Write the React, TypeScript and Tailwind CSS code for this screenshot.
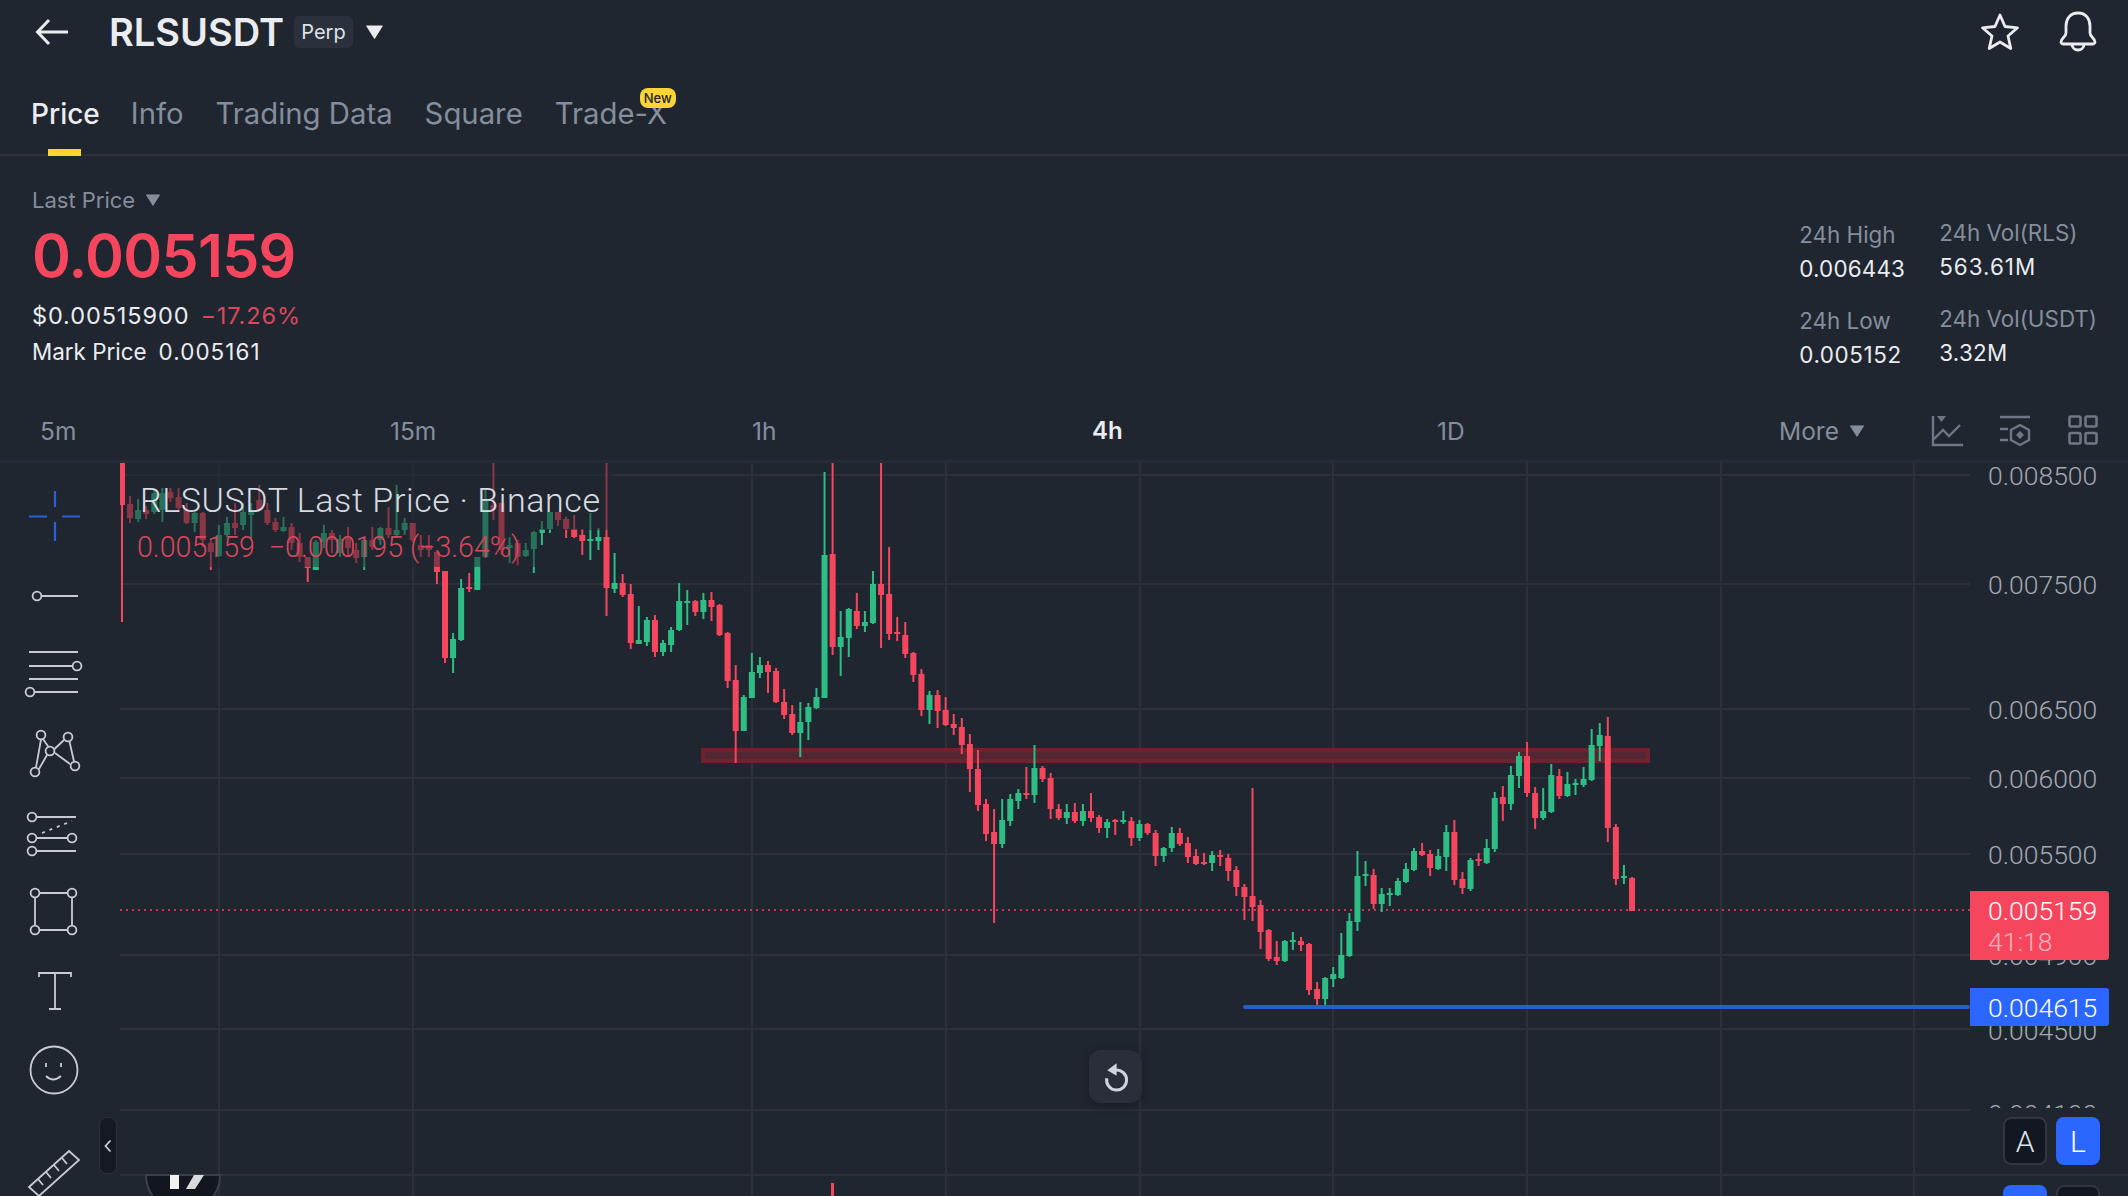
import React from "react";

const C: [number, number, number, number, number][] = [
[0,463,463,505,622],[0,496,504,518,523],[1,499,510,519,522],[0,506,510,514,519],[1,490,493,512,514],[1,488,493,510,522],[0,488,492,498,502],[0,488,497,508,512],[0,503,510,523,524],[1,512,513,523,532],
[0,512,513,540,547],[0,540,543,552,570],[1,525,535,556,557],[1,517,523,535,537],[0,503,523,528,535],[1,503,512,525,530],[1,503,512,515,538],[0,485,500,510,511],[0,503,510,523,525],[0,518,522,530,532],
[1,517,527,531,532],[0,523,527,543,550],[0,533,543,557,562],[0,557,557,568,582],[1,540,542,570,570],[1,525,533,542,548],[0,530,533,540,553],[1,535,539,553,557],[0,527,538,548,557],[0,543,550,558,563],
[1,537,540,557,570],[0,527,540,547,550],[1,527,528,540,545],[0,507,528,535,538],[1,485,530,535,538],[1,518,523,530,535],[0,523,523,540,542],[0,535,545,550,557],[0,535,545,550,557],[0,550,552,572,584],
[0,571,571,658,663],[1,633,639,658,673],[1,579,588,640,641],[0,573,587,589,592],[1,557,557,590,590],[1,490,500,557,558],[0,463,505,510,520],[0,503,503,550,555],[1,537,545,548,563],[0,540,543,557,565],
[1,543,550,556,557],[1,531,532,549,573],[1,521,529,533,545],[1,512,512,529,533],[0,512,512,520,526],[0,517,519,529,538],[0,515,529,537,538],[0,529,535,541,555],[1,513,539,541,560],[1,528,537,541,550],
[0,463,537,588,616],[1,553,583,589,593],[0,574,583,595,597],[0,584,594,643,649],[1,606,640,644,644],[1,617,620,642,646],[0,615,620,652,657],[1,640,643,652,656],[1,627,630,645,652],[1,583,601,630,631],
[1,590,601,603,625],[0,600,601,612,616],[1,593,600,612,619],[0,592,600,607,621],[0,604,605,635,636],[0,632,633,681,688],[0,665,680,731,763],[1,695,697,731,731],[1,653,672,698,698],[1,657,665,673,678],
[0,661,665,672,693],[0,668,671,702,703],[0,689,702,715,719],[0,705,714,733,735],[1,702,722,733,757],[1,703,707,722,740],[1,688,697,708,709],[1,472,555,698,698],[0,463,554,647,655],[1,611,637,647,676],
[1,608,609,638,657],[0,593,611,626,629],[1,611,622,626,632],[1,571,584,623,624],[0,463,584,595,648],[0,547,594,634,640],[0,617,632,633,641],[0,622,635,654,658],[0,652,653,675,682],[0,669,674,710,716],
[1,691,695,710,724],[0,690,695,711,728],[0,697,710,725,726],[0,714,724,728,735],[0,718,727,745,754],[0,734,744,769,792],[0,750,769,805,811],[0,799,804,834,841],[0,809,832,844,923],[1,799,820,844,848],
[1,794,799,821,826],[1,789,793,801,809],[0,767,793,795,799],[1,745,768,795,803],[0,766,768,779,782],[0,773,778,809,819],[0,804,809,818,820],[1,804,812,818,824],[0,803,812,821,823],[1,804,811,821,826],
[0,793,811,818,822],[0,815,817,828,833],[1,819,822,828,838],[0,819,820,821,835],[1,811,820,821,824],[0,817,821,838,846],[1,820,824,838,841],[0,823,824,833,835],[0,830,833,856,866],[1,847,848,856,862],
[1,827,833,848,852],[0,828,833,844,846],[0,837,843,857,863],[0,849,856,864,865],[0,853,862,863,865],[1,851,855,863,871],[0,850,855,856,866],[0,854,858,871,881],[0,866,870,887,896],[0,884,887,897,920],
[0,788,896,907,921],[0,900,905,932,949],[0,929,930,959,961],[0,941,957,961,965],[1,940,941,961,962],[1,932,940,941,950],[0,937,941,945,951],[0,943,944,990,995],[0,982,989,999,1009],[1,977,978,999,1007],
[1,967,974,979,987],[1,933,955,978,979],[1,913,921,956,957],[1,851,876,922,931],[1,861,874,876,886],[0,869,875,904,909],[1,888,894,904,912],[1,888,893,894,906],[1,878,881,895,896],[1,863,869,882,883],
[1,848,851,870,871],[0,843,851,855,856],[0,850,854,868,876],[1,849,856,869,870],[1,825,832,857,871],[0,820,832,880,885],[0,872,879,888,894],[1,858,860,889,891],[0,853,859,861,866],[1,839,848,863,864],
[1,792,798,849,852],[0,786,797,804,821],[1,766,775,804,810],[1,752,756,776,788],[0,742,756,793,797],[0,787,793,818,829],[1,788,811,818,820],[1,764,775,812,813],[0,769,776,796,799],[1,772,784,796,797],
[1,779,783,784,795],[1,767,779,785,787],[1,729,745,780,781],[1,723,735,746,761],[0,717,736,828,842],[0,824,827,879,885],[1,865,876,877,884],[0,877,878,911,911],
];

const RED = "#f6465d";
const GREEN = "#2ebd85";
const GRID = "#2b303b";
const HL = [475, 584, 709, 778, 854, 955, 1029, 1110, 1175];
const VL = [219, 413, 752, 946, 1140, 1333, 1527, 1721, 1914];

function Caret({ cls }: { cls: string }) {
  return (
    <svg viewBox="0 0 10 8" className={cls} fill="currentColor">
      <path d="M0.6 0.6 H9.4 L5 7.6 Z" stroke="currentColor" strokeWidth="0.6" strokeLinejoin="round" />
    </svg>
  );
}

function Tool({ k, children }: { k: number; children: React.ReactNode }) {
  return (
    <svg
      viewBox={`12 ${477 + 79 * k} 90 79`}
      className="h-[79px] w-[90px] shrink-0"
      fill="none"
      stroke="#c7ccd4"
      strokeWidth="1.8"
    >
      {children}
    </svg>
  );
}

function Toolbar() {
  return (
    <div className="relative flex h-full w-[120px] shrink-0 flex-col pl-[12px] pt-[14px]">
      <Tool k={0}>
        <path d="M29 516.5 H47 M62 516.5 H80 M55 491 V507 M55 522 V541" stroke="#2a5fd8" strokeWidth="2.2" />
      </Tool>
      <Tool k={1}>
        <circle cx="37" cy="596" r="4.4" />
        <path d="M41.5 596 H78" />
      </Tool>
      <Tool k={2}>
        <path d="M29 652 H78 M29 666 H72 M29 679 H78 M35 692 H78" />
        <circle cx="77" cy="666" r="4.4" />
        <circle cx="30" cy="692" r="4.4" />
      </Tool>
      <Tool k={3}>
        <circle cx="41" cy="735" r="4.4" />
        <circle cx="68" cy="737" r="4.4" />
        <circle cx="50" cy="751" r="4.4" />
        <circle cx="35" cy="772" r="4.4" />
        <circle cx="75" cy="766" r="4.4" />
        <path d="M41 739.5 L36 767.5 M43 739 L48.5 747 M39 769 L47 755 M54.5 749 L64 740 M55 753 L70 764 M69.5 741.5 L74 761.5" />
      </Tool>
      <Tool k={4}>
        <circle cx="32" cy="817" r="4.4" />
        <circle cx="32" cy="838" r="4.4" />
        <circle cx="72" cy="838" r="4.4" />
        <circle cx="32" cy="851" r="4.4" />
        <path d="M36.5 817 H76 M36.5 838 H67.5 M36.5 851 H76" />
        <path d="M42 833 L72 821" strokeDasharray="3 5" />
      </Tool>
      <Tool k={5}>
        <circle cx="35" cy="893" r="4.4" />
        <circle cx="72" cy="893" r="4.4" />
        <circle cx="35" cy="930" r="4.4" />
        <circle cx="72" cy="930" r="4.4" />
        <path d="M39.5 893 H67.5 M39.5 930 H67.5 M35 897.5 V925.5 M72 897.5 V925.5" />
      </Tool>
      <Tool k={6}>
        <path d="M39 977 V973 H71 V977 M55 973 V1009 M49 1009 H61" />
      </Tool>
      <Tool k={7}>
        <circle cx="54" cy="1070" r="23.5" />
        <path d="M46 1063 V1067 M61 1063 V1067" />
        <path d="M46 1076 Q53 1083 61 1076" />
      </Tool>
      <div className="ml-[3px] mt-[14px] h-[2px] w-[79px] bg-[#3a3f49]" />
      <svg viewBox="0 0 60 50" className="ml-[14px] mt-[24px] h-[50px] w-[60px] shrink-0" fill="none" stroke="#c7ccd4" strokeWidth="1.8">
        <path d="M3 40 L43 4 L53 13 L13 49 Z" />
        <path d="M12 32 L17 38 M20 25 L25 31 M28 18 L33 24 M36 11 L41 17" />
      </svg>
      <div className="absolute left-[99px] top-[654px] flex h-[57px] w-[18px] items-center justify-center rounded-lg border border-[#2b313c] bg-[#141924] text-[#c7ccd4]">
        <svg viewBox="0 0 8 14" className="h-[14px] w-[8px]" fill="none" stroke="currentColor" strokeWidth="1.8">
          <path d="M6.5 1.5 L1.5 7 L6.5 12.5" />
        </svg>
      </div>
    </div>
  );
}

function Chart() {
  return (
    <div className="relative h-full w-[1850px] shrink-0">
      <svg viewBox="120 463 1850 733" className="absolute inset-0 h-full w-full">
        {HL.map((y) => (
          <rect key={y} x="120" y={y - 1} width="1850" height="2" fill={GRID} />
        ))}
        {VL.map((x) => (
          <rect key={x} x={x - 1} y="463" width="2" height="733" fill={GRID} />
        ))}
        <rect x="701" y="748" width="949" height="15" fill="#6f212d" />
        <rect x="705" y="752" width="941" height="7" fill="#522632" />
        <line x1="120" y1="910" x2="1970" y2="910" stroke="#f6465d" strokeOpacity="0.75" strokeWidth="2" strokeDasharray="2 4" />
        {C.map(([g, wt, bt, bb, wb], i) => {
          const x = 122 + 8.075 * i;
          const color = g ? GREEN : RED;
          return (
            <g key={i} fill={color}>
              <rect x={x - 1} y={wt} width="2" height={wb - wt} />
              <rect x={x - 3} y={bt} width="6" height={Math.max(bb - bt, 2)} />
            </g>
          );
        })}
        <rect x="127" y="463" width="486" height="67" fill="#202630" fillOpacity="0.5" />
        <rect x="127" y="530" width="413" height="37" fill="#202630" fillOpacity="0.5" />
        <rect x="1243" y="1005" width="727" height="4" rx="2" fill="#2a5bd7" />
        <rect x="831" y="1183" width="3" height="13" fill={RED} />
        <g>
          <path d="M146 1175 A37 37 0 0 0 220 1175 Z" fill="#12161f" stroke="#3a3f49" strokeWidth="2" />
          <rect x="170" y="1175" width="9" height="14" fill="#f1f2f4" />
          <path d="M194 1175 H204 L195 1189 H186 Z" fill="#d8dade" />
        </g>
      </svg>
      <div className="absolute left-[20px] top-[20px] font-['Roboto',sans-serif] text-[34px] font-light leading-[34px] tracking-[0.6px] text-[#d7dbe1]">
        RLSUSDT Last Price · Binance
      </div>
      <div className="absolute left-[17px] top-[68px] whitespace-pre font-['Roboto',sans-serif] text-[28.6px] font-light leading-[32px] text-[#d8485c]">
        0.005159  −0.000195 (−3.64%)
      </div>
      <button className="absolute left-[969px] top-[587px] flex h-[53px] w-[53px] items-center justify-center rounded-xl bg-[#2a2e3a] shadow-[0_2px_10px_rgba(0,0,0,0.3)]">
        <svg viewBox="0 0 24 24" className="h-[30px] w-[30px]" fill="none">
          <path d="M11.5 6.5 A8 8 0 1 1 4.6 13" stroke="#cfd4dc" strokeWidth="2.4" />
          <path d="M12.5 1 V11 L5 6.5 Z" fill="#cfd4dc" />
        </svg>
      </button>
    </div>
  );
}

const AXIS: [string, number][] = [
  ["0.008500", 476],
  ["0.007500", 585],
  ["0.006500", 710],
  ["0.006000", 779],
  ["0.005500", 855],
  ["0.004900", 956],
  ["0.004500", 1031],
  ["0.004100", 1114],
];

function Axis() {
  return (
    <div className="relative h-full flex-1 font-['Roboto',sans-serif]">
      <div className="absolute left-0 top-0 h-[645px] w-full overflow-hidden">
        {AXIS.map(([t, y]) => (
          <div key={t} className="absolute left-[18px] text-[26.5px] font-light leading-[30px] text-[#a3a8b1]" ref={(el) => { if (el) el.style.top = `${y - 463 - 15}px`; }}>
            {t}
          </div>
        ))}
      </div>
      <div className="absolute left-0 top-[428px] flex h-[69px] w-[139px] flex-col rounded-r-[3px] bg-[#f6465d] pl-[18px] pt-[4px] text-[26.5px] font-light leading-[31px] text-white">
        <span>0.005159</span>
        <span className="text-white/60">41:18</span>
      </div>
      <div className="absolute left-0 top-[525px] h-[38px] w-[139px] rounded-r-[3px] bg-[#2a66ff] pl-[18px] text-[26.5px] font-light leading-[39px] text-white">
        0.004615
      </div>
      <div className="absolute left-0 top-[711px] h-[2px] w-full bg-[#2b303b]" />
      <div className="absolute left-[33px] top-[654px] flex h-[48px] w-[44px] items-center justify-center rounded-lg border-2 border-[#31363f] bg-[#131722] text-[30px] font-light text-[#dfe2e7]">
        A
      </div>
      <div className="absolute left-[86px] top-[654px] flex h-[48px] w-[44px] items-center justify-center rounded-lg bg-[#2a66ff] text-[30px] font-light text-white">
        L
      </div>
      <div className="absolute left-[33px] top-[722px] h-[47px] w-[44px] rounded-lg bg-[#2a66ff]" />
      <div className="absolute left-[86px] top-[722px] h-[47px] w-[44px] rounded-lg border-2 border-[#31363f] bg-[#131722]" />
    </div>
  );
}

export default function App() {
  return (
    <div className="flex h-[1196px] w-[2128px] flex-col overflow-hidden bg-[#202630] font-['Inter',sans-serif]">
      {/* Header */}
      <div className="flex h-[64px] shrink-0 items-center pl-[35px] pr-[30px] text-[#eaecef]">
        <svg viewBox="0 0 34 28" className="h-[28px] w-[34px]" fill="none" stroke="currentColor" strokeWidth="3">
          <path d="M33 14 H3 M14 2 L2.5 14 L14 26" />
        </svg>
        <span className="ml-[40px] text-[38px] font-semibold leading-[44px]">RLSUSDT</span>
        <span className="ml-[10px] flex h-[32px] w-[59px] items-center justify-center rounded-[5px] bg-[#2a303c] text-[20px] text-[#dfe2e7]">Perp</span>
        <Caret cls="ml-[12px] h-[14px] w-[19px] text-[#eaecef]" />
        <div className="flex-1" />
        <svg viewBox="0 0 40 40" className="h-[40px] w-[40px]" fill="none" stroke="currentColor" strokeWidth="2.8" strokeLinejoin="round">
          <path d="M20 3 L25 14.5 L37.5 15.8 L28 24 L30.8 36.5 L20 30 L9.2 36.5 L12 24 L2.5 15.8 L15 14.5 Z" />
        </svg>
        <svg viewBox="0 0 40 42" className="ml-[38px] h-[42px] w-[40px]" fill="none" stroke="currentColor" strokeWidth="2.8">
          <path d="M20 2 C12 2 8 8 8 15 V22 C8 26 3 27 3 31 C3 32 4 33 5 33 H35 C36 33 37 32 37 31 C37 27 32 26 32 22 V15 C32 8 28 2 20 2 Z" />
          <path d="M14 33 C14 37 17 39 20 39 C23 39 26 37 26 33" />
        </svg>
      </div>

      {/* Tabs */}
      <div className="relative flex h-[92px] shrink-0 items-start border-b-2 border-[#2b303b] pl-[31px] pt-[32px] text-[29.3px] leading-[36px] text-[#848e9c]">
        <span className="text-[28px] font-medium text-[#eaecef]">Price</span>
        <span className="ml-[31px]">Info</span>
        <span className="ml-[32px]">Trading Data</span>
        <span className="ml-[32px]">Square</span>
        <span className="relative ml-[32px]">
          Trade-X
          <span className="absolute left-[85px] top-[-8px] flex h-[20px] w-[36px] items-center justify-center rounded-[8px] bg-[#fcd535] text-[13px] font-medium leading-none text-[#1e2329]">New</span>
        </span>
        <div className="absolute bottom-[-2px] left-[48px] h-[7px] w-[33px] bg-[#fcd535]" />
      </div>

      {/* Price block */}
      <div className="flex h-[244px] shrink-0 justify-between pl-[32px] pr-[31px]">
        <div className="flex flex-col pt-[29px]">
          <div className="flex h-[30px] items-center text-[22px] text-[#848e9c]">
            Last Price
            <Caret cls="ml-[10px] h-[12px] w-[16px]" />
          </div>
          <div className="mt-[11px] h-[60px] text-[59px] font-semibold leading-[60px] tracking-[-0.7px] text-[#f6465d]">0.005159</div>
          <div className="mt-[15px] flex h-[30px] items-center text-[23.5px] leading-[30px] tracking-[0.9px] text-[#eaecef]">
            $0.00515900
            <span className="ml-[11px] text-[#d8485c]">−17.26%</span>
          </div>
          <div className="mt-[7px] flex h-[28px] items-center text-[22.4px] text-[#eaecef]">
            Mark Price
            <span className="ml-[12px] tracking-[1.1px]">0.005161</span>
          </div>
        </div>
        <div className="flex text-[22.4px] leading-[28px]">
          <div className="w-[140px] pt-[65px]">
            <div className="text-[#848e9c]">24h High</div>
            <div className="mt-[6px] tracking-[0.2px] text-[#eaecef]">0.006443</div>
            <div className="mt-[24px] text-[#848e9c]">24h Low</div>
            <div className="mt-[6px] tracking-[0.6px] text-[#eaecef]">0.005152</div>
          </div>
          <div className="pt-[63px]">
            <div className="text-[#848e9c]">24h Vol(RLS)</div>
            <div className="mt-[6px] tracking-[1px] text-[#eaecef]">563.61M</div>
            <div className="mt-[24px] text-[#848e9c]">24h Vol(USDT)</div>
            <div className="mt-[6px] tracking-[0.3px] text-[#eaecef]">3.32M</div>
          </div>
        </div>
      </div>

      {/* Timeframes */}
      <div className="grid h-[63px] shrink-0 grid-cols-[350px_362px_340px_345px_342px_152px_68px_69px_1fr] items-start border-b-[3px] border-[#262c37] pl-[40px] pt-[16px] text-[24.5px] leading-[30px] text-[#848e9c]">
        <span>5m</span>
        <span>15m</span>
        <span>1h</span>
        <span className="text-[24px] font-semibold text-[#eaecef]">4h</span>
        <span>1D</span>
        <span className="flex items-center">
          More
          <Caret cls="ml-[10px] h-[12px] w-[16px]" />
        </span>
        <svg viewBox="0 0 32 32" className="-mt-[1px] h-[32px] w-[32px] text-[#6f7785]" fill="none" stroke="currentColor" strokeWidth="2.4">
          <path d="M2 1 V30 H32 M3 24 L12 15 L18 21 L29 10" />
          <path d="M6 1 H15 L10.5 7 Z" fill="currentColor" stroke="none" />
        </svg>
        <svg viewBox="0 0 32 32" className="-mt-[1px] h-[32px] w-[32px] text-[#6f7785]" fill="none" stroke="currentColor" strokeWidth="2.4">
          <path d="M1 2 H31 M1 14 H9 M1 25 H9" />
          <path d="M21 10 L30 15 V25 L21 30 L12 25 V15 Z" />
          <path d="M21 16 L25 20 L21 24 L17 20 Z" fill="currentColor" stroke="none" />
        </svg>
        <svg viewBox="0 0 30 30" className="-mt-[1px] h-[30px] w-[30px] text-[#6f7785]" fill="none" stroke="currentColor" strokeWidth="2.6">
          <rect x="1.5" y="1.5" width="11" height="10" rx="1.5" />
          <rect x="17.5" y="1.5" width="11" height="10" rx="1.5" />
          <rect x="1.5" y="18" width="11" height="10.5" rx="1.5" />
          <rect x="17.5" y="18" width="11" height="10.5" rx="1.5" />
        </svg>
      </div>

      {/* Chart area */}
      <div className="flex min-h-0 flex-1">
        <Toolbar />
        <Chart />
        <Axis />
      </div>
    </div>
  );
}
